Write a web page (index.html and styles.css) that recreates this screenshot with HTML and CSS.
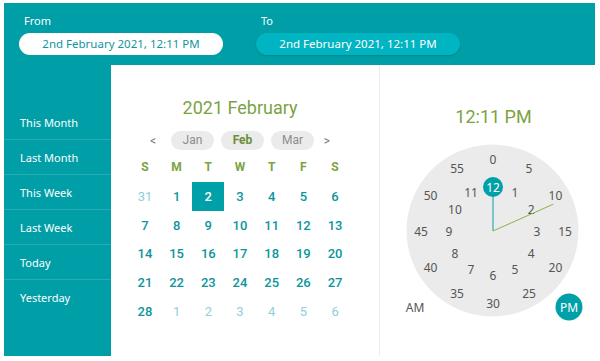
FILE: index.html
```html
<!DOCTYPE html>
<html>
<head>
<meta charset="utf-8">
<link rel="stylesheet" href="styles.css">
</head>
<body>
<div class="picker">
  <header class="bar">
    <div class="field">
      <div class="field-label">From</div>
      <div class="field-input field-input--from">2nd February 2021, 12:11 PM</div>
    </div>
    <div class="field">
      <div class="field-label">To</div>
      <div class="field-input field-input--to">2nd February 2021, 12:11 PM</div>
    </div>
  </header>
  <div class="main">
    <nav class="presets">
      <div class="preset">This Month</div>
      <div class="preset">Last Month</div>
      <div class="preset">This Week</div>
      <div class="preset">Last Week</div>
      <div class="preset">Today</div>
      <div class="preset">Yesterday</div>
    </nav>
    <section class="calendar">
      <div class="cal-title">2021 February</div>
      <div class="months">
        <span class="arrow arrow--prev">&lt;</span>
        <span class="month">Jan</span>
        <span class="month month--active">Feb</span>
        <span class="month">Mar</span>
        <span class="arrow arrow--next">&gt;</span>
      </div>
      <div class="weekdays">
        <span>S</span><span>M</span><span>T</span><span>W</span><span>T</span><span>F</span><span>S</span>
      </div>
      <div class="days">
        <span class="day day--muted">31</span><span class="day">1</span><span class="day day--selected">2</span><span class="day">3</span><span class="day">4</span><span class="day">5</span><span class="day">6</span>
        <span class="day">7</span><span class="day">8</span><span class="day">9</span><span class="day">10</span><span class="day">11</span><span class="day">12</span><span class="day">13</span>
        <span class="day">14</span><span class="day">15</span><span class="day">16</span><span class="day">17</span><span class="day">18</span><span class="day">19</span><span class="day">20</span>
        <span class="day">21</span><span class="day">22</span><span class="day">23</span><span class="day">24</span><span class="day">25</span><span class="day">26</span><span class="day">27</span>
        <span class="day">28</span><span class="day day--muted">1</span><span class="day day--muted">2</span><span class="day day--muted">3</span><span class="day day--muted">4</span><span class="day day--muted">5</span><span class="day day--muted">6</span>
      </div>
    </section>
    <section class="clock">
      <div class="clock-time">12:11 PM</div>
      <svg class="dial" width="196" height="186" viewBox="396 140 196 186">
        <circle class="dial-face" cx="492.5" cy="230.5" r="86"/>
        <g class="dial-num">
          <text x="493" y="159">0</text>
          <text x="529" y="168.6">5</text>
          <text x="555.4" y="195">10</text>
          <text x="565" y="231">15</text>
          <text x="555.4" y="267">20</text>
          <text x="529" y="293.4">25</text>
          <text x="493" y="303">30</text>
          <text x="457" y="293.4">35</text>
          <text x="430.6" y="267">40</text>
          <text x="421" y="231">45</text>
          <text x="430.6" y="195">50</text>
          <text x="457" y="168.6">55</text>
          <text x="515" y="192.9">1</text>
          <text x="531.1" y="209">2</text>
          <text x="537" y="231">3</text>
          <text x="531.1" y="253">4</text>
          <text x="515" y="269.1">5</text>
          <text x="493" y="275">6</text>
          <text x="471" y="269.1">7</text>
          <text x="454.9" y="253">8</text>
          <text x="449" y="231">9</text>
          <text x="454.9" y="209">10</text>
          <text x="471" y="192.9">11</text>
        </g>
        <line class="hand-hour" x1="493" y1="231" x2="493" y2="196"/>
        <line class="hand-minute" x1="493" y1="231" x2="553.3" y2="204.2"/>
        <circle class="dial-sel" cx="493" cy="187" r="10"/>
        <text class="dial-num dial-num--sel" x="493" y="187">12</text>
        <text class="dial-num" x="415" y="307">AM</text>
        <circle class="dial-sel" cx="569" cy="307" r="13.5"/>
        <text class="dial-num dial-num--sel" x="569" y="307">PM</text>
      </svg>
    </section>
  </div>
</div>
</body>
</html>
```
FILE: styles.css
```css
body {
  margin: 0;
  background: #fff;
  font-family: "Noto Sans", "DejaVu Sans", sans-serif;
}

.picker {
  margin: 3px 5px 0 4px;
  width: 591px;
}

.bar {
  height: 62px;
  background: #009ea6;
  display: flex;
  gap: 33px;
  padding: 11px 0 0 15px;
  box-sizing: border-box;
}

.field-label {
  color: #fff;
  font-size: 11px;
  line-height: 14px;
  padding-left: 5px;
  margin-bottom: 5px;
}

.field-input {
  width: 204px;
  height: 22px;
  border-radius: 11px;
  font-size: 11.5px;
  line-height: 22px;
  text-align: center;
}

.field-input--from {
  background: #fff;
  color: #13959c;
}

.field-input--to {
  background: #00b4c1;
  color: #fff;
  box-shadow: 0 1px 2px rgba(0, 0, 0, 0.15);
}

.main {
  display: flex;
  height: 291px;
}

.presets {
  width: 107px;
  background: #009ea6;
  padding-top: 40px;
  box-sizing: border-box;
}

.preset {
  height: 35px;
  line-height: 35px;
  padding-left: 16px;
  color: #fff;
  font-size: 11px;
  border-bottom: 1px solid rgba(255, 255, 255, 0.16);
  box-sizing: border-box;
}

.preset:last-child {
  border-bottom: none;
}

.calendar {
  width: 269px;
  border-right: 1px solid #ececec;
  padding: 32px 10px 0 0;
  box-sizing: border-box;
  display: flex;
  flex-direction: column;
  align-items: center;
  font-family: Roboto, "Noto Sans", sans-serif;
}

.cal-title {
  font-size: 18px;
  line-height: 22px;
  color: #7ba33f;
}

.months {
  display: flex;
  align-items: center;
  height: 19px;
  margin-top: 12px;
  font-size: 12px;
}

.arrow {
  width: 14px;
  text-align: center;
  color: #777;
}

.arrow--prev {
  margin-right: 11px;
}

.arrow--next {
  margin-left: 6px;
}

.month {
  width: 43px;
  height: 19px;
  border-radius: 10px;
  background: #ebebeb;
  line-height: 19px;
  text-align: center;
  color: #8c8c8c;
}

.month + .month {
  margin-left: 7px;
}

.month--active {
  color: #6b8e3c;
  font-weight: 700;
}

.weekdays,
.days {
  display: grid;
  grid-template-columns: repeat(7, 31.7px);
}

.weekdays {
  margin-top: 9px;
  line-height: 16px;
  font-size: 12px;
  font-weight: 700;
  color: #7ba33f;
  text-align: center;
}

.days {
  margin-top: 7px;
  grid-auto-rows: 28.7px;
}

.day {
  display: flex;
  align-items: center;
  justify-content: center;
  font-size: 13px;
  font-weight: 500;
  color: #0c959d;
}

.day--muted {
  color: #8ed1d7;
  font-weight: 400;
}

.day--selected {
  background: #00a0a8;
  color: #fff;
}

.clock {
  flex: 1;
  padding: 41px 0 0 12px;
  box-sizing: border-box;
  display: flex;
  flex-direction: column;
  align-items: center;
}

.clock-time {
  font-family: Roboto, "Noto Sans", sans-serif;
  font-size: 18px;
  line-height: 22px;
  color: #7ba33f;
}

.dial {
  display: block;
  margin-top: 12px;
}

.dial-face {
  fill: #ebebeb;
}

.dial-num {
  font-family: "Noto Sans", sans-serif;
  font-size: 12px;
  fill: #555;
  text-anchor: middle;
  dominant-baseline: central;
}

.dial-num text {
  text-anchor: middle;
  dominant-baseline: central;
}

.dial-num--sel {
  fill: #fff;
}

.dial-sel {
  fill: #00a0a8;
}

.hand-hour {
  stroke: #00a0a8;
  stroke-width: 1;
}

.hand-minute {
  stroke: #8ab04a;
  stroke-width: 1;
}
```
